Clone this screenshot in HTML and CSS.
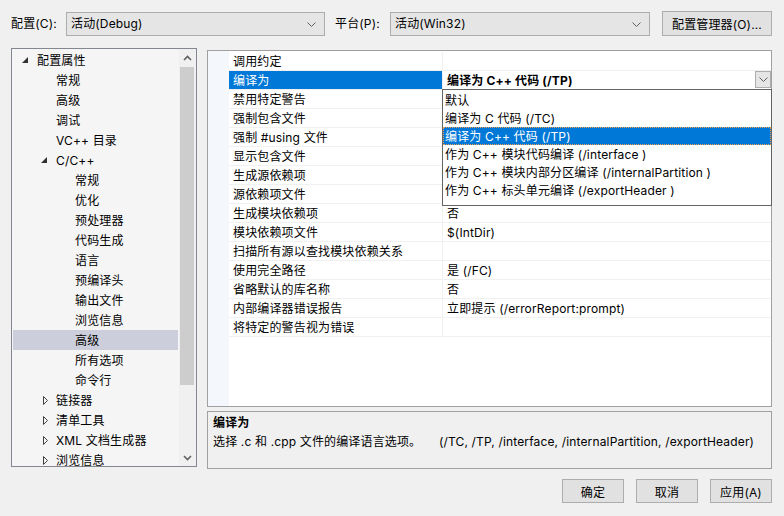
FILE: index.html
```html
<!DOCTYPE html>
<html lang="zh-CN">
<head>
    <meta charset="UTF-8">
    <meta name="viewport" content="width=device-width, initial-scale=1.0">
    <title>属性页</title>
    <link rel="stylesheet" href="styles.css">
</head>
<body>

<div class="dialog">
    <!-- configuration / platform selectors -->
    <div class="topbar">
        <span class="top-label">配置(C):</span>
        <div class="combo combo-config">
            <span class="combo-text">活动(Debug)</span>
            <svg class="chev" width="9" height="5" viewBox="0 0 9 5"><path d="M0.5 0.5 L4.5 4.5 L8.5 0.5" fill="none" stroke="#606060"/></svg>
        </div>
        <span class="top-label top-label-plat">平台(P):</span>
        <div class="combo combo-plat">
            <span class="combo-text">活动(Win32)</span>
            <svg class="chev" width="9" height="5" viewBox="0 0 9 5"><path d="M0.5 0.5 L4.5 4.5 L8.5 0.5" fill="none" stroke="#606060"/></svg>
        </div>
        <button class="btn btn-manager">配置管理器(O)...</button>
    </div>

    <div class="main">
        <!-- category tree -->
        <div class="tree">
            <ul class="tree-list">
                <li class="tree-row lvl0"><span class="toggle"><svg width="15" height="20" viewBox="0 0 15 20"><path d="M6 7 L6 13 L0 13 Z" fill="#303030"/></svg></span>配置属性</li>
                <li class="tree-row lvl1"><span class="toggle"></span>常规</li>
                <li class="tree-row lvl1"><span class="toggle"></span>高级</li>
                <li class="tree-row lvl1"><span class="toggle"></span>调试</li>
                <li class="tree-row lvl1"><span class="toggle"></span>VC++ 目录</li>
                <li class="tree-row lvl1"><span class="toggle"><svg width="15" height="20" viewBox="0 0 15 20"><path d="M6 7 L6 13 L0 13 Z" fill="#303030"/></svg></span>C/C++</li>
                <li class="tree-row lvl2"><span class="toggle"></span>常规</li>
                <li class="tree-row lvl2"><span class="toggle"></span>优化</li>
                <li class="tree-row lvl2"><span class="toggle"></span>预处理器</li>
                <li class="tree-row lvl2"><span class="toggle"></span>代码生成</li>
                <li class="tree-row lvl2"><span class="toggle"></span>语言</li>
                <li class="tree-row lvl2"><span class="toggle"></span>预编译头</li>
                <li class="tree-row lvl2"><span class="toggle"></span>输出文件</li>
                <li class="tree-row lvl2"><span class="toggle"></span>浏览信息</li>
                <li class="tree-row lvl2 selected"><span class="toggle"></span>高级</li>
                <li class="tree-row lvl2"><span class="toggle"></span>所有选项</li>
                <li class="tree-row lvl2"><span class="toggle"></span>命令行</li>
                <li class="tree-row lvl1"><span class="toggle"><svg width="15" height="20" viewBox="0 0 15 20"><path d="M2.5 6.5 L2.5 14.5 L6.5 10.5 Z" fill="none" stroke="#404040"/></svg></span>链接器</li>
                <li class="tree-row lvl1"><span class="toggle"><svg width="15" height="20" viewBox="0 0 15 20"><path d="M2.5 6.5 L2.5 14.5 L6.5 10.5 Z" fill="none" stroke="#404040"/></svg></span>清单工具</li>
                <li class="tree-row lvl1"><span class="toggle"><svg width="15" height="20" viewBox="0 0 15 20"><path d="M2.5 6.5 L2.5 14.5 L6.5 10.5 Z" fill="none" stroke="#404040"/></svg></span>XML 文档生成器</li>
                <li class="tree-row lvl1"><span class="toggle"><svg width="15" height="20" viewBox="0 0 15 20"><path d="M2.5 6.5 L2.5 14.5 L6.5 10.5 Z" fill="none" stroke="#404040"/></svg></span>浏览信息</li>
            </ul>
            <div class="vscroll">
                <div class="vscroll-btn">
                    <svg width="9" height="6" viewBox="0 0 9 6"><path d="M1 5 L4.5 1.5 L8 5" fill="none" stroke="#606060" stroke-width="1.6"/></svg>
                </div>
                <div class="vscroll-thumb"></div>
                <div class="vscroll-space"></div>
                <div class="vscroll-btn">
                    <svg width="9" height="6" viewBox="0 0 9 6"><path d="M1 1 L4.5 4.5 L8 1" fill="none" stroke="#606060" stroke-width="1.6"/></svg>
                </div>
            </div>
        </div>

        <div class="right">
            <!-- property grid -->
            <div class="grid">
                <div class="gutter"></div>
                <div class="grid-rows">
                    <div class="prop"><div class="prop-name">调用约定</div><div class="prop-value"></div></div>
                    <div class="prop active">
                        <div class="prop-name">编译为</div>
                        <div class="prop-value bold">编译为 C++ 代码 (/TP)
                            <span class="drop-btn"><svg width="9" height="5" viewBox="0 0 9 5"><path d="M0.5 0.5 L4.5 4.5 L8.5 0.5" fill="none" stroke="#606060"/></svg></span>
                        </div>
                    </div>
                    <div class="prop"><div class="prop-name">禁用特定警告</div><div class="prop-value"></div></div>
                    <div class="prop"><div class="prop-name">强制包含文件</div><div class="prop-value"></div></div>
                    <div class="prop"><div class="prop-name">强制 #using 文件</div><div class="prop-value"></div></div>
                    <div class="prop"><div class="prop-name">显示包含文件</div><div class="prop-value"></div></div>
                    <div class="prop"><div class="prop-name">生成源依赖项</div><div class="prop-value"></div></div>
                    <div class="prop"><div class="prop-name">源依赖项文件</div><div class="prop-value"></div></div>
                    <div class="prop"><div class="prop-name">生成模块依赖项</div><div class="prop-value">否</div></div>
                    <div class="prop"><div class="prop-name">模块依赖项文件</div><div class="prop-value">$(IntDir)</div></div>
                    <div class="prop"><div class="prop-name">扫描所有源以查找模块依赖关系</div><div class="prop-value"></div></div>
                    <div class="prop"><div class="prop-name">使用完全路径</div><div class="prop-value">是 (/FC)</div></div>
                    <div class="prop"><div class="prop-name">省略默认的库名称</div><div class="prop-value">否</div></div>
                    <div class="prop"><div class="prop-name">内部编译器错误报告</div><div class="prop-value">立即提示 (/errorReport:prompt)</div></div>
                    <div class="prop"><div class="prop-name">将特定的警告视为错误</div><div class="prop-value"></div></div>
                </div>

                <!-- open dropdown of 编译为 -->
                <ul class="droplist">
                    <li class="drop-item">默认</li>
                    <li class="drop-item">编译为 C 代码 (/TC)</li>
                    <li class="drop-item current">编译为 C++ 代码 (/TP)</li>
                    <li class="drop-item">作为 C++ 模块代码编译 (/interface )</li>
                    <li class="drop-item">作为 C++ 模块内部分区编译 (/internalPartition )</li>
                    <li class="drop-item">作为 C++ 标头单元编译 (/exportHeader )</li>
                </ul>
            </div>

            <div class="desc">
                <div class="desc-title">编译为</div>
                <div class="desc-text"><span class="desc-main">选择 .c 和 .cpp 文件的编译语言选项。</span><span>(/TC, /TP, /interface, /internalPartition, /exportHeader)</span></div>
            </div>
        </div>
    </div>

    <div class="footer">
        <button class="btn btn-footer">确定</button>
        <button class="btn btn-footer">取消</button>
        <button class="btn btn-footer">应用(A)</button>
    </div>
</div>

</body>
</html>
```

FILE: styles.css
```css
* {
    box-sizing: border-box;
}

body {
    margin: 0;
    background-color: #f0f0f0;
    font-family: Inter, "Noto Sans CJK SC", sans-serif;
    font-size: 12px;
    letter-spacing: 0.15px;
    color: #000;
}

.dialog {
    width: 784px;
    height: 516px;
    padding: 11px 12px 0 11px;
}

/* top bar */
.topbar {
    display: flex;
    align-items: flex-start;
    height: 25px;
}

.top-label {
    width: 55px;
    line-height: 26px;
}

.top-label-plat {
    margin-left: 10px;
}

.combo {
    display: flex;
    align-items: center;
    height: 24px;
    margin-top: 1px;
    padding: 0 8px 0 4px;
    background-color: #e5e5e5;
    border: 1px solid #adadad;
}

.combo-config {
    width: 259px;
}

.combo-plat {
    width: 260px;
}

.combo-text {
    flex: 1;
    line-height: 22px;
}

.btn {
    font-family: inherit;
    font-size: 12px;
    letter-spacing: inherit;
    color: #000;
    background-color: #e1e1e1;
    border: 1px solid #adadad;
    padding: 0;
}

.btn-manager {
    width: 110px;
    height: 25px;
    margin-left: 12px;
}

/* main area */
.main {
    display: flex;
    margin-top: 12px;
}

.tree {
    display: flex;
    width: 186px;
    height: 419px;
    background-color: #f5f5f5;
    border: 1px solid #828790;
}

.tree-list {
    flex: 1;
    height: 417px;
    list-style: none;
    margin: 0;
    padding: 1px 1px 0 1px;
}

.tree-row {
    display: flex;
    align-items: center;
    height: 20px;
    line-height: 20px;
    padding-top: 1px;
    white-space: nowrap;
}

.tree-row.lvl0 {
    padding-left: 9px;
}

.tree-row.lvl1 {
    padding-left: 28px;
}

.tree-row.lvl2 {
    padding-left: 47px;
}

.tree-row.selected {
    background-color: #cccedb;
}

.toggle {
    display: inline-flex;
    flex: none;
    width: 15px;
    height: 20px;
    margin-top: -1px;
}

.vscroll {
    display: flex;
    flex-direction: column;
    width: 17px;
    background-color: #f0f0f0;
}

.vscroll-btn {
    display: flex;
    align-items: center;
    justify-content: center;
    height: 17px;
}

.vscroll-thumb {
    height: 318px;
    margin: 1px 2px 0 1px;
    background-color: #cdcdcd;
}

.vscroll-space {
    flex: 1;
}

.right {
    display: flex;
    flex-direction: column;
    width: 565px;
    margin-left: 10px;
    margin-top: 2px;
}

/* property grid */
.grid {
    position: relative;
    display: flex;
    height: 357px;
    background-color: #fff;
    border: 1px solid #a0a0a0;
}

.gutter {
    width: 21px;
    background-color: #f4f7fc;
}

.grid-rows {
    flex: 1;
    padding-top: 1px;
}

.prop {
    display: flex;
    height: 19px;
    border-bottom: 1px solid #f0f0f0;
    line-height: 19px;
    white-space: nowrap;
}

.prop-name {
    width: 214px;
    padding-left: 4px;
    border-right: 1px solid #f0f0f0;
}

.prop-value {
    flex: 1;
    display: flex;
    padding-left: 4px;
}

.prop.active .prop-name {
    background-color: #0078d7;
    color: #fff;
}

.bold {
    font-weight: bold;
}

.drop-btn {
    display: flex;
    align-items: center;
    justify-content: center;
    width: 16px;
    height: 17px;
    margin-left: auto;
    background-color: #e5e5e5;
    border: 1px solid #adadad;
}

.droplist {
    position: absolute;
    left: 234px;
    top: 38px;
    width: 330px;
    height: 117px;
    margin: 0;
    padding: 1px 0 0 0;
    list-style: none;
    background-color: #fff;
    border: 1px solid #646464;
}

.drop-item {
    height: 18px;
    line-height: 19px;
    padding-left: 2px;
    white-space: nowrap;
}

.drop-item.current {
    background-color: #0078d7;
    color: #fff;
    outline: 1px dotted #f0a050;
    outline-offset: -1px;
}

/* description */
.desc {
    height: 58px;
    margin-top: 4px;
    padding: 1px 5px 0 5px;
    border: 1px solid #a0a0a0;
    line-height: 20px;
}

.desc-title {
    font-weight: bold;
}

.desc-text {
    margin-top: -1px;
}

.desc-main {
    display: inline-block;
    width: 226px;
}

/* footer buttons */
.footer {
    display: flex;
    justify-content: flex-end;
    gap: 12px;
    margin-top: 10px;
}

.btn-footer {
    width: 62px;
    height: 24px;
}
```
